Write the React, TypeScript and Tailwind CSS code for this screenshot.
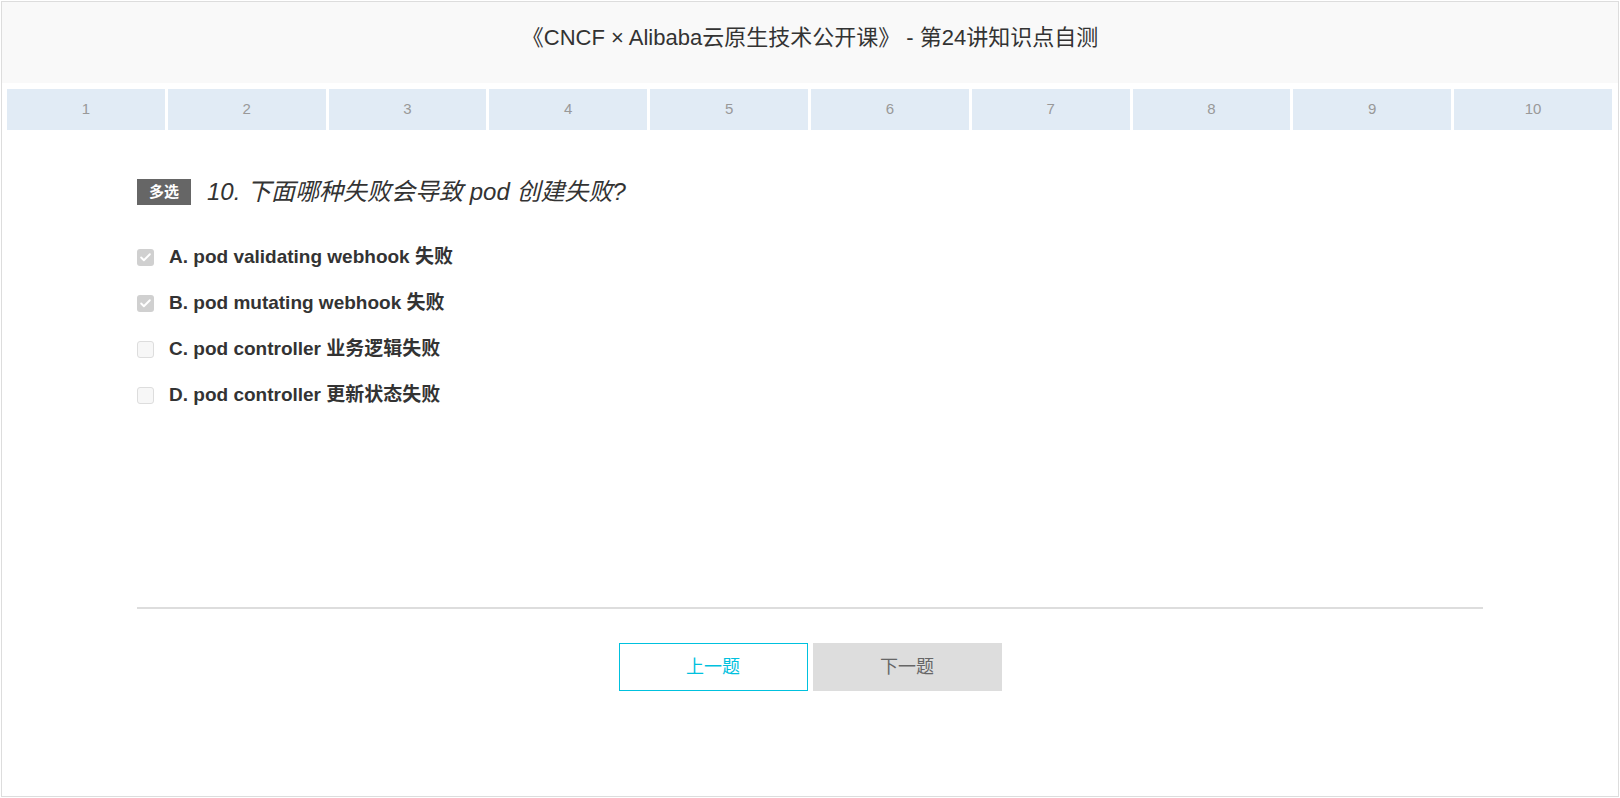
import { Check } from 'lucide-react';

const tabs = [1, 2, 3, 4, 5, 6, 7, 8, 9, 10];

const options = [
  { key: 'A', text: 'A. pod validating webhook 失败', checked: true },
  { key: 'B', text: 'B. pod mutating webhook 失败', checked: true },
  { key: 'C', text: 'C. pod controller 业务逻辑失败', checked: false },
  { key: 'D', text: 'D. pod controller 更新状态失败', checked: false },
];

const font = { fontFamily: '"Liberation Sans", Arial, "Noto Sans CJK SC", sans-serif' };

export default function App() {
  return (
    <div className="w-[1620px] h-[798px] p-px bg-white text-[#333]" style={font}>
      <div className="h-full border border-[#ddd] flex flex-col">
        {/* header */}
        <div className="h-[81px] bg-[#f9f9f9] pt-[22px] text-center text-[22px] leading-[28px] text-[#333]">
          《CNCF × Alibaba云原生技术公开课》 - 第24讲知识点自测
        </div>

        {/* question nav */}
        <div className="mt-[6px] pl-[5px] pr-[6px] grid grid-cols-10 gap-[3px]">
          {tabs.map((n) => (
            <div key={n} className="h-[41px] bg-[#e1ebf5] flex items-center justify-center text-[15px] text-[#999]">
              {n}
            </div>
          ))}
        </div>

        {/* question body */}
        <div className="mx-[135px] flex-1 flex flex-col">
          <div className="mt-[48px] flex items-center">
            <span className="w-[54px] h-[26px] bg-[#666] text-white text-[15px] font-bold flex items-center justify-center">
              多选
            </span>
            <span className="ml-[16px] text-[24px] italic text-[#333] leading-[28px]">
              10. 下面哪种失败会导致 pod 创建失败?
            </span>
          </div>

          <div className="mt-[43px] flex flex-col gap-[29px]">
            {options.map((o) => (
              <label key={o.key} className="flex items-center h-[17px]">
                {o.checked ? (
                  <span className="w-[17px] h-[17px] rounded-[3px] bg-[#d0d0d0] flex items-center justify-center">
                    <Check size={13} strokeWidth={3.5} className="text-white" />
                  </span>
                ) : (
                  <span className="w-[17px] h-[17px] rounded-[3px] bg-[#f7f7f7] border border-[#ddd]" />
                )}
                <span className="ml-[15px] text-[19px] font-bold text-[#333]">{o.text}</span>
              </label>
            ))}
          </div>

          <div className="mt-[203px] h-[2px] bg-[#ddd]" />

          <div className="mt-[34px] flex justify-center gap-[5px]">
            <button className="w-[189px] h-[48px] border border-[#00c1de] text-[#00c1de] text-[18px] bg-white">
              上一题
            </button>
            <button className="w-[189px] h-[48px] bg-[#ddd] text-[#666] text-[18px]">
              下一题
            </button>
          </div>
        </div>
      </div>
    </div>
  );
}
